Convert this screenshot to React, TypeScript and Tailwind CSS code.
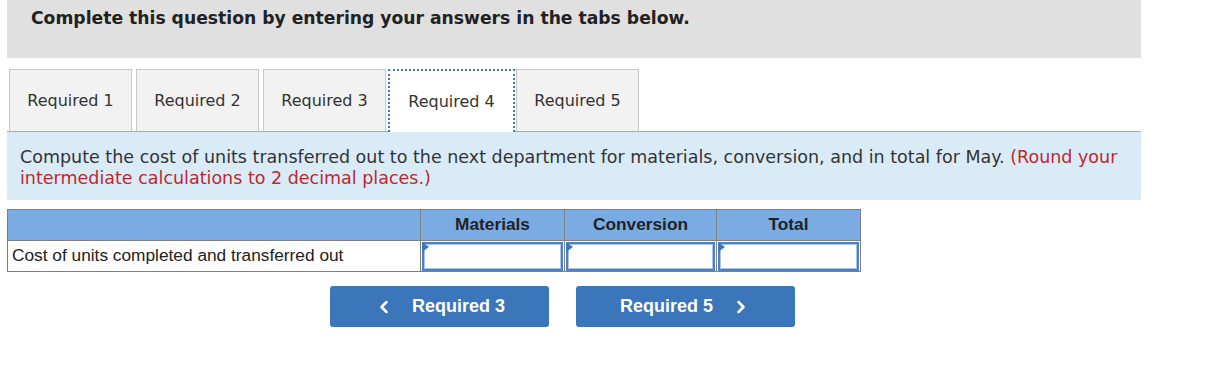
import { ChevronLeft, ChevronRight } from "lucide-react";

const tabs = ["Required 1", "Required 2", "Required 3", "Required 4", "Required 5"];
const active = 3;

function AmountCell() {
  return (
    <td className="border border-[#808080] p-0 h-[31px]">
      <div className="relative mx-px h-[29px] border-2 border-[#4a80c4] bg-white outline outline-1 outline-[#a9c6ea] -outline-offset-3">
        <span className="absolute -left-[2px] -top-[2px] h-0 w-0 border-y-[5px] border-l-[7px] border-y-transparent border-l-[#3b76b8]" />
      </div>
    </td>
  );
}

export default function App() {
  return (
    <div className="w-[1205px] h-[389px] bg-white font-['DejaVu_Sans',sans-serif] text-[#222]">
      <div className="ml-[7px] w-[1134px]">
        <div className="h-[58px] bg-[#e0e0e0] pl-[24px] pt-[6px] text-[17.2px] font-bold">
          Complete this question by entering your answers in the tabs below.
        </div>

        <div className="mt-[11px] flex h-[63px] items-stretch gap-[4px] border-b border-[#aaaaaa] pl-[2px]">
          {tabs.map((t, i) =>
            i === active ? (
              <div
                key={t}
                className="relative z-10 -mb-px -ml-[2px] -mr-[3px] flex w-[127px] items-center justify-center border-2 border-b-0 border-dotted border-[#3b76b8] bg-white text-[16px] text-[#333]"
              >
                {t}
              </div>
            ) : (
              <div
                key={t}
                className="flex w-[123px] items-center justify-center border border-b-0 border-[#c8c8c8] bg-[#f2f2f2] text-[16px] text-[#333]"
              >
                {t}
              </div>
            )
          )}
        </div>

        <div className="h-[68px] bg-[#daebf8] pl-[13px] pt-[15px] text-[17.5px] leading-[21px] text-[#333]">
          Compute the cost of units transferred out to the next department for materials, conversion, and in total for May.{" "}
          <span className="text-[#c0272d]">(Round your intermediate calculations to 2 decimal places.)</span>
        </div>

        <table className="mt-[9px] border-collapse font-['Liberation_Sans',sans-serif] text-[17.3px]">
          <thead>
            <tr className="h-[31px] bg-[#7aabe3]">
              <th className="w-[413px] border border-[#808080]"></th>
              <th className="w-[144px] border border-[#808080] font-bold text-[#222]">Materials</th>
              <th className="w-[152px] border border-[#808080] font-bold text-[#222]">Conversion</th>
              <th className="w-[144px] border border-[#808080] font-bold text-[#222]">Total</th>
            </tr>
          </thead>
          <tbody>
            <tr className="h-[31px]">
              <td className="border border-[#808080] pl-[4px] text-left text-[#222]">
                Cost of units completed and transferred out
              </td>
              <AmountCell />
              <AmountCell />
              <AmountCell />
            </tr>
          </tbody>
        </table>

        <div className="mt-[14px] ml-[323px] flex gap-[27px] font-['Liberation_Sans',sans-serif] text-[18px] font-bold text-white">
          <button className="flex h-[41px] w-[219px] items-center justify-center gap-[18px] rounded-[3px] bg-[#3a76b9]">
            <ChevronLeft size={20} strokeWidth={3} />
            Required 3
          </button>
          <button className="flex h-[41px] w-[219px] items-center justify-center gap-[18px] rounded-[3px] bg-[#3a76b9]">
            Required 5
            <ChevronRight size={20} strokeWidth={3} />
          </button>
        </div>
      </div>
    </div>
  );
}
